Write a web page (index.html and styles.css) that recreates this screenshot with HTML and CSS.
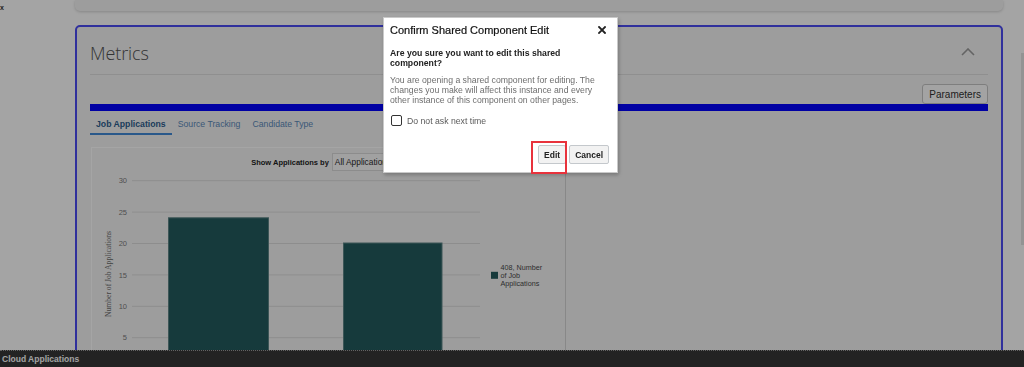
FILE: index.html
```html
<!DOCTYPE html>
<html lang="en">
<head>
<meta charset="utf-8">
<title>Metrics – Confirm Shared Component Edit</title>
<link rel="stylesheet" href="styles.css">
</head>
<body>
<div class="page">
  <aside class="rail"><span class="rail-text">x</span></aside>
  <main class="main">
    <div class="topcard"></div>
    <section class="card">
      <header class="card-head">
        <h2 class="card-title">Metrics</h2>
        <svg class="chevron" width="14" height="8" viewBox="0 0 14 8" aria-hidden="true">
          <polyline points="1,7 7,1 13,7" fill="none" stroke="#9a9a9a" stroke-width="1.6"/>
        </svg>
      </header>
      <div class="toolbar"><button class="btn-params" type="button">Parameters</button></div>
      <div class="bluebar"></div>
      <nav class="tabs">
        <a class="tab active">Job Applications</a>
        <a class="tab">Source Tracking</a>
        <a class="tab">Candidate Type</a>
      </nav>
      <div class="panel">
        <div class="filter">
          <span class="filter-label">Show Applications by</span>
          <span class="select">All Applications</span>
        </div>
        <svg class="chart" width="473" height="200" viewBox="0 0 473 200">
          <g class="grid" stroke="#d9d9d9" stroke-width="1">
            <line x1="40" y1="8.7" x2="388" y2="8.7"/>
            <line x1="40" y1="40.1" x2="388" y2="40.1"/>
            <line x1="40" y1="71.5" x2="388" y2="71.5"/>
            <line x1="40" y1="102.9" x2="388" y2="102.9"/>
            <line x1="40" y1="134.3" x2="388" y2="134.3"/>
            <line x1="40" y1="165.7" x2="388" y2="165.7"/>
          </g>
          <g class="ylabels" font-family="Liberation Sans, Arial, sans-serif" font-size="7.5" fill="#7a7a7a" text-anchor="end">
            <text x="35" y="11.4">30</text>
            <text x="35" y="42.8">25</text>
            <text x="35" y="74.2">20</text>
            <text x="35" y="105.6">15</text>
            <text x="35" y="137">10</text>
            <text x="35" y="168.4">5</text>
          </g>
          <text transform="translate(18.5 102) rotate(-90)" font-family="Liberation Serif, serif" font-size="7.6" fill="#6a6a6a" text-anchor="middle">Number of Job Applications</text>
          <rect x="76.5" y="45.8" width="100" height="160" fill="#235a5d" stroke="#5e8486" stroke-width="1"/>
          <rect x="251.5" y="71" width="98.5" height="140" fill="#235a5d" stroke="#5e8486" stroke-width="1"/>
          <rect x="399" y="99.8" width="7" height="7" fill="#235a5d"/>
          <g font-family="Liberation Sans, Arial, sans-serif" font-size="7.2" fill="#484848">
            <text x="408.5" y="98">408, Number</text>
            <text x="408.5" y="106">of Job</text>
            <text x="408.5" y="114">Applications</text>
          </g>
        </svg>
      </div>
    </section>
  </main>
</div>
<div class="scroll-thumb"></div>
<footer class="footbar">Cloud Applications</footer>
<div class="overlay"></div>
<div class="dialog" role="dialog" aria-label="Confirm Shared Component Edit">
  <div class="dialog-head">
    <span class="dialog-title">Confirm Shared Component Edit</span>
    <svg class="dialog-close" width="8" height="8" viewBox="0 0 8 8" aria-hidden="true">
      <path d="M1 1 L7 7 M7 1 L1 7" stroke="#222" stroke-width="1.8" stroke-linecap="square"/>
    </svg>
  </div>
  <div class="dialog-body">
    <p class="question">Are you sure you want to edit this shared component?</p>
    <p class="message">You are opening a shared component for editing. The changes you make will affect this instance and every other instance of this component on other pages.</p>
    <label class="check"><span class="box"></span>Do not ask next time</label>
  </div>
  <div class="dialog-foot">
    <button class="btn" type="button">Edit</button>
    <button class="btn" type="button">Cancel</button>
  </div>
  <div class="highlight"></div>
</div>
</body>
</html>
```

FILE: styles.css
```css
html, body {
  margin: 0;
  padding: 0;
}

body {
  width: 1024px;
  height: 367px;
  overflow: hidden;
  background: #fcfcfc;
  font-family: "Liberation Sans", Arial, sans-serif;
  color: #333;
}

.page {
  display: flex;
  align-items: flex-start;
}

.rail {
  width: 75px;
  flex: none;
  padding-top: 4px;
}

.rail-text {
  display: block;
  font-size: 7px;
  font-weight: bold;
  color: #333;
}

.main {
  width: 928px;
  flex: none;
}

.topcard {
  height: 11px;
  background: #f2f2f2;
  border-radius: 0 0 5px 5px;
  box-shadow: 0 1px 3px rgba(0, 0, 0, 0.18);
}

.card {
  margin-top: 14px;
  height: 360px;
  background: #f2f2f2;
  border: 2px solid #4a4af0;
  border-radius: 5px 5px 0 0;
  padding: 0 13px;
}

.card-head {
  height: 47px;
  display: flex;
  align-items: center;
  justify-content: space-between;
  border-bottom: 1px solid #dcdcdc;
}

.card-title {
  margin: 5px 0 0;
  font-family: "Open Sans", sans-serif;
  font-weight: 300;
  font-size: 18px;
  color: #505050;
  letter-spacing: -0.1px;
}

.chevron {
  margin-right: 13px;
  margin-top: 2px;
}

.toolbar {
  display: flex;
  justify-content: flex-end;
  padding-top: 9px;
}

.btn-params {
  height: 20px;
  padding: 0 6px;
  font-family: "Liberation Sans", Arial, sans-serif;
  font-size: 10px;
  color: #303030;
  background: #fbfbfb;
  border: 1px solid #c2c2c2;
  border-radius: 3px;
}

.bluebar {
  height: 7px;
  background: #0000fa;
}

.tabs {
  display: flex;
  margin-top: 4px;
}

.tab {
  padding: 0 6px;
  line-height: 18px;
  font-size: 8.7px;
  color: #5a88b8;
  border-bottom: 2px solid transparent;
}

.tab.active {
  font-weight: bold;
  color: #2e5c8c;
  border-bottom-color: #4088d4;
}

.panel {
  margin: 12px 0 0 1px;
  width: 475px;
  box-sizing: border-box;
  height: 230px;
  border: 1px solid #fdfdfd;
  border-right-color: #d2d2d2;
  border-bottom: none;
}

.filter {
  display: flex;
  justify-content: center;
  align-items: center;
  gap: 3px;
  padding: 5px 0 1px;
}

.filter-label {
  font-size: 7.5px;
  font-weight: bold;
  color: #222;
}

.select {
  box-sizing: border-box;
  width: 74px;
  height: 18px;
  line-height: 16px;
  padding-left: 2px;
  font-size: 8.4px;
  color: #2a2a2a;
  background: #f8f8f8;
  border: 1px solid #d8d8d8;
  white-space: nowrap;
  overflow: hidden;
}

.chart {
  display: block;
}

.scroll-thumb {
  position: fixed;
  right: 0;
  top: 53px;
  width: 3px;
  height: 192px;
  background: #e2e2e2;
}

.footbar {
  position: fixed;
  left: 0;
  right: 0;
  bottom: 0;
  height: 16px;
  line-height: 17px;
  padding-left: 2px;
  background: #363636;
  border-top: 1px dotted #9a9a9a;
  font-size: 8.5px;
  font-weight: bold;
  color: #fafafa;
}

.overlay {
  position: fixed;
  inset: 0;
  background: rgba(0, 0, 0, 0.35);
}

.dialog {
  position: fixed;
  left: 383px;
  top: 17px;
  width: 235px;
  height: 156px;
  box-sizing: border-box;
  background: #fff;
  border: 1px solid #c9c9c9;
  box-shadow: 1px 2px 4px rgba(0, 0, 0, 0.25);
  display: flex;
  flex-direction: column;
}

.dialog-head {
  height: 21px;
  display: flex;
  align-items: center;
  justify-content: space-between;
  padding: 0 11px 0 6px;
  margin-top: 1px;
}

.dialog-title {
  font-size: 11px;
  color: #111;
  -webkit-text-stroke: 0.2px #111;
}

.dialog-close {
  margin-top: 1px;
}

.dialog-body {
  padding: 8px 6px 0;
  font-size: 8.7px;
}

.question {
  margin: 0;
  line-height: 10px;
  font-weight: bold;
  color: #222;
  width: 200px;
}

.message {
  margin: 6.6px 0 0;
  line-height: 10px;
  color: #6e6e6e;
  width: 222px;
}

.check {
  display: flex;
  align-items: center;
  margin-top: 10.5px;
  color: #5a5a5a;
}

.box {
  box-sizing: border-box;
  width: 11px;
  height: 11px;
  margin: 0 5px 0 1px;
  border: 1.5px solid #333;
  border-radius: 2px;
}

.dialog-foot {
  display: flex;
  justify-content: flex-end;
  gap: 3px;
  padding: 19px 8px 0;
}

.btn {
  box-sizing: border-box;
  height: 19px;
  padding: 0 5px;
  font-family: "Liberation Sans", Arial, sans-serif;
  font-size: 8.5px;
  font-weight: bold;
  color: #222;
  background: #f2f2f2;
  border: 1px solid #c4c8cc;
  border-radius: 2px;
}

.highlight {
  position: absolute;
  left: 147px;
  top: 123px;
  width: 36px;
  height: 33px;
  box-sizing: border-box;
  border: 2px solid #e8323c;
}
```
